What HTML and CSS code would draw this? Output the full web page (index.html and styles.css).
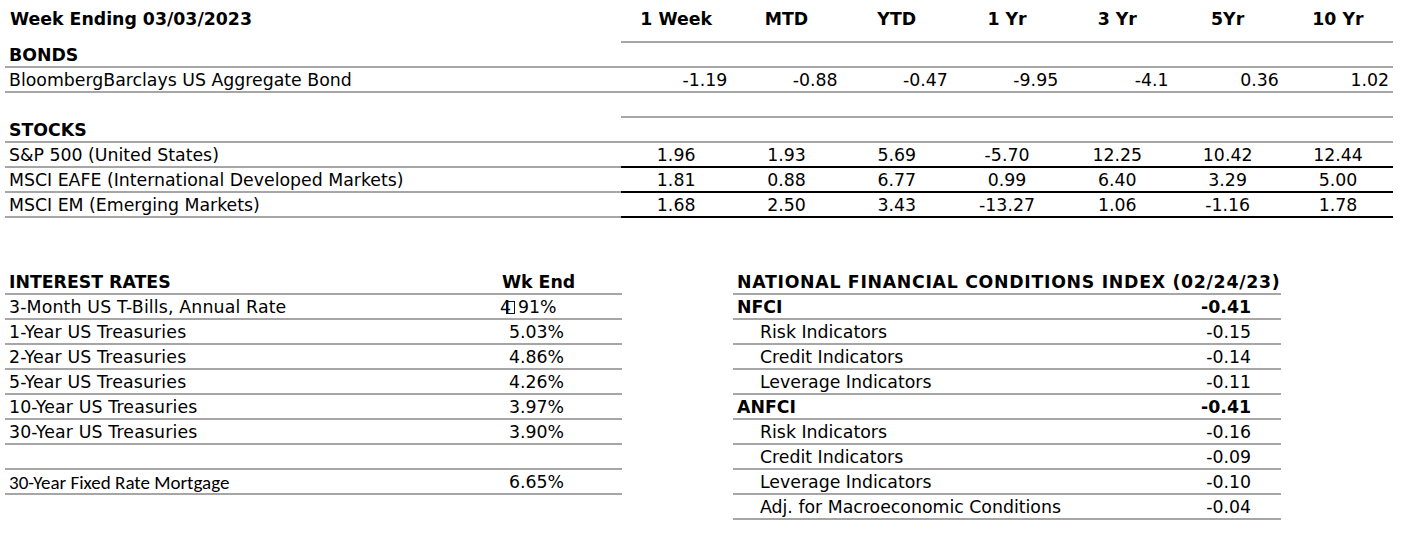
FILE: index.html
```html
<!DOCTYPE html>
<html>
<head>
<meta charset="utf-8">
<link rel="stylesheet" href="styles.css">
</head>
<body>
<table class="perf">
  <colgroup>
    <col class="c-label">
    <col class="c-num"><col class="c-num"><col class="c-num"><col class="c-num"><col class="c-num"><col class="c-num"><col class="c-num">
  </colgroup>
  <tr class="head">
    <td class="title">Week Ending 03/03/2023</td>
    <td class="h g">1 Week</td><td class="h g">MTD</td><td class="h g">YTD</td><td class="h g">1 Yr</td><td class="h g">3 Yr</td><td class="h g">5Yr</td><td class="h g">10 Yr</td>
  </tr>
  <tr>
    <td class="sect g">BONDS</td>
    <td class="g"></td><td class="g"></td><td class="g"></td><td class="g"></td><td class="g"></td><td class="g"></td><td class="g"></td>
  </tr>
  <tr>
    <td class="lbl g">BloombergBarclays US Aggregate Bond</td>
    <td class="n r g">-1.19</td><td class="n r g">-0.88</td><td class="n r g">-0.47</td><td class="n r g">-9.95</td><td class="n r g">-4.1</td><td class="n r g">0.36</td><td class="n r g">1.02</td>
  </tr>
  <tr>
    <td class="lbl"></td>
    <td class="g"></td><td class="g"></td><td class="g"></td><td class="g"></td><td class="g"></td><td class="g"></td><td class="g"></td>
  </tr>
  <tr>
    <td class="sect g">STOCKS</td>
    <td class="g"></td><td class="g"></td><td class="g"></td><td class="g"></td><td class="g"></td><td class="g"></td><td class="g"></td>
  </tr>
  <tr>
    <td class="lbl g">S&amp;P 500 (United States)</td>
    <td class="n k">1.96</td><td class="n k">1.93</td><td class="n k">5.69</td><td class="n k">-5.70</td><td class="n k">12.25</td><td class="n k">10.42</td><td class="n k">12.44</td>
  </tr>
  <tr>
    <td class="lbl g">MSCI EAFE (International Developed Markets)</td>
    <td class="n k">1.81</td><td class="n k">0.88</td><td class="n k">6.77</td><td class="n k">0.99</td><td class="n k">6.40</td><td class="n k">3.29</td><td class="n k">5.00</td>
  </tr>
  <tr>
    <td class="lbl g">MSCI EM (Emerging Markets)</td>
    <td class="n k">1.68</td><td class="n k">2.50</td><td class="n k">3.43</td><td class="n k">-13.27</td><td class="n k">1.06</td><td class="n k">-1.16</td><td class="n k">1.78</td>
  </tr>
</table>

<div class="lower">
  <table class="rates">
    <colgroup><col class="r-label"><col class="r-val"></colgroup>
    <tr><td class="sect g">INTEREST RATES</td><td class="sect g center">Wk End</td></tr>
    <tr><td class="lbl g">3-Month US T-Bills, Annual Rate</td><td class="val g"><span class="shift">4<span class="tofu"></span>91%</span></td></tr>
    <tr><td class="lbl g">1-Year US Treasuries</td><td class="val g">5.03%</td></tr>
    <tr><td class="lbl g">2-Year US Treasuries</td><td class="val g">4.86%</td></tr>
    <tr><td class="lbl g">5-Year US Treasuries</td><td class="val g">4.26%</td></tr>
    <tr><td class="lbl g">10-Year US Treasuries</td><td class="val g">3.97%</td></tr>
    <tr><td class="lbl g">30-Year US Treasuries</td><td class="val g">3.90%</td></tr>
    <tr><td class="lbl g"></td><td class="val g"></td></tr>
    <tr><td class="lbl cal g">30-Year Fixed Rate Mortgage</td><td class="val g">6.65%</td></tr>
  </table>

  <table class="nfci">
    <colgroup><col class="f-label"><col class="f-val"></colgroup>
    <tr><td class="sect wide g" colspan="2">NATIONAL FINANCIAL CONDITIONS INDEX (02/24/23)</td></tr>
    <tr><td class="sect g">NFCI</td><td class="sect fv g">-0.41</td></tr>
    <tr><td class="lbl ind g">Risk Indicators</td><td class="fv g">-0.15</td></tr>
    <tr><td class="lbl ind g">Credit Indicators</td><td class="fv g">-0.14</td></tr>
    <tr><td class="lbl ind g">Leverage Indicators</td><td class="fv g">-0.11</td></tr>
    <tr><td class="sect g">ANFCI</td><td class="sect fv g">-0.41</td></tr>
    <tr><td class="lbl ind g">Risk Indicators</td><td class="fv g">-0.16</td></tr>
    <tr><td class="lbl ind g">Credit Indicators</td><td class="fv g">-0.09</td></tr>
    <tr><td class="lbl ind g">Leverage Indicators</td><td class="fv g">-0.10</td></tr>
    <tr><td class="lbl ind g">Adj. for Macroeconomic Conditions</td><td class="fv g">-0.04</td></tr>
  </table>
</div>
</body>
</html>
```

FILE: styles.css
```css
html, body {
  margin: 0;
  padding: 0;
  background: #ffffff;
}

body {
  font-family: "DejaVu Sans", Verdana, sans-serif;
  font-size: 17.33px;
  color: #000;
  padding-left: 5px;
}

table {
  border-collapse: collapse;
  table-layout: fixed;
}

td {
  padding: 2px 4px 0 4px;
  height: 21px;
  white-space: nowrap;
  line-height: 21px;
  vertical-align: middle;
}

.g { border-bottom: 2px solid #a6a6a6; }
.k { border-bottom: 2px solid #000; }

/* top performance table */
.perf { width: 1388px; }
.c-label { width: 616px; }
.c-num { width: 110.3px; }

.perf .head td {
  height: 36px;
  padding-top: 1px;
  padding-bottom: 4px;
}
.title {
  font-weight: bold;
  padding-left: 5px;
}
.h {
  font-weight: bold;
  text-align: center;
}
.sect { font-weight: bold; }
.wide { letter-spacing: 0.7px; }
.n { text-align: center; }
.n.r { text-align: right; }

/* lower section */
.lower {
  display: flex;
  align-items: flex-start;
  gap: 111px;
  margin-top: 52px;
}

.rates { width: 617px; }
.r-label { width: 450px; }
.r-val { width: 167px; }
.rates .lbl { letter-spacing: 0.15px; }
.center { text-align: center; }
.val { padding-left: 54px; }
.shift { margin-left: -9px; }
.tofu {
  display: inline-block;
  width: 7px;
  height: 11px;
  border: 1px solid #111;
  margin-left: -5px;
  margin-right: 3px;
  vertical-align: -1px;
}
.rates .cal {
  font-family: Carlito, "Liberation Sans Narrow", "Liberation Sans", sans-serif;
  font-size: 19px;
  letter-spacing: 0;
}

.nfci { width: 548px; }
.f-label { width: 430px; }
.f-val { width: 118px; }
.ind { padding-left: 27px; }
.fv { text-align: right; padding-right: 30px; }
```
